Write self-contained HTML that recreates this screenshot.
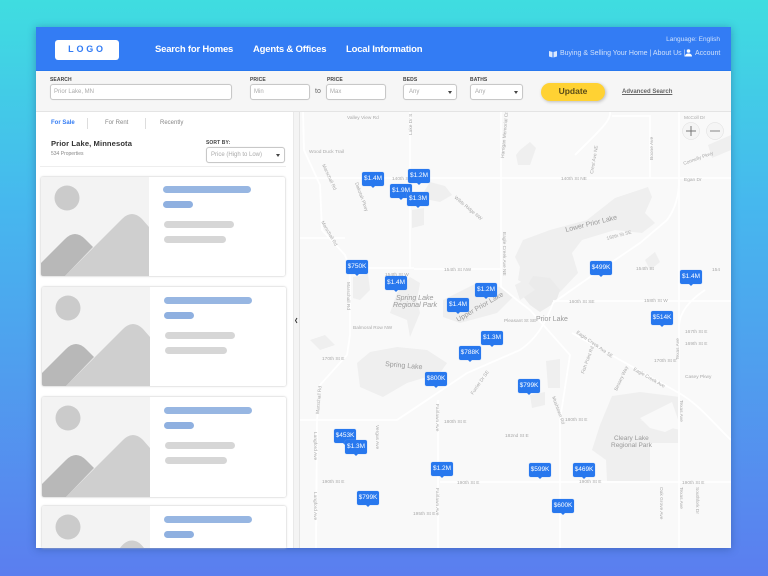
<!DOCTYPE html>
<html><head><meta charset="utf-8"><style>
html,body{margin:0;padding:0;width:768px;height:576px;overflow:hidden}
body{background:linear-gradient(180deg,#3fdde0 0%,#46b8ee 35%,#5b7eef 100%);font-family:"Liberation Sans",sans-serif;position:relative}
.a{position:absolute;white-space:nowrap}
.lb{font-size:5px;font-weight:bold;color:#444;letter-spacing:.1px}
.in{background:#fff;border:1px solid #c8c8c8;border-radius:3px;box-sizing:border-box;height:16px;font-size:6px;color:#aaa;line-height:14px;padding-left:3px;box-shadow:0 0 1px #ddd}
.ar{position:absolute;right:4px;top:6px;width:0;height:0;border-left:2px solid transparent;border-right:2px solid transparent;border-top:3px solid #444}
.card{position:absolute;width:244px;height:99px;box-sizing:border-box;background:#fff;border-radius:2px;box-shadow:0 0 2px #bbb;overflow:hidden}
.bar{position:absolute;height:7px;border-radius:4px}
.nav{top:44px;color:#fff;font-size:9.500px;font-weight:bold;letter-spacing:-.2px}
.p{position:absolute;width:22px;height:14px;margin:-7px 0 0 -11px;background:#2878ee;border-radius:2px;color:#fff;font-size:6.500px;line-height:13px;text-align:center;box-shadow:0 0 1px #8fb6f3}
.p:after{content:"";position:absolute;left:8px;top:13px;border-left:3px solid transparent;border-right:3px solid transparent;border-top:3px solid #2878ee}
</style></head><body>
<div class="a" style="left:36px;top:27px;width:695px;height:521px;background:#fff;box-shadow:0 1px 8px rgba(30,60,120,.4);overflow:hidden"></div>

<svg class="a" style="left:36px;top:111px" width="695" height="437" viewBox="36 111 695 437">
<rect x="300" y="111" width="431" height="437" fill="#f9f9f9"/>
<g fill="#efefef">
<path d="M515 257L523 240L550 230L587 220L615 198L648 187L652 197L645 213L655 223L642 233L615 230L582 240L572 253L578 273L562 290L548 303L535 290L518 280L520 267Z"/>
<path d="M533 276L550 278L560 290L556 302L540 312L530 305L522 295Z" fill="#ebebeb"/>
<path d="M357 363L370 352L397 347L427 350L447 363L440 373L407 383L383 397L360 387Z"/>
<path d="M410 277L420 283L417 300L420 313L410 337L407 320L390 313L397 293Z"/>
<path d="M353 277L368 274L370 290L360 300L353 298Z"/>
<path d="M477 283L500 287L513 297L497 313L460 323L443 317L443 300Z"/>
<path d="M430 182L445 186L452 195L440 202L430 200L422 195Z"/>
<path d="M412 210L424 208L424 225L412 228Z"/>
<path d="M612 396L640 392L680 397L679 423L650 420L640 420L680 430L680 443L650 443L650 481L607 481L606 460L592 450L600 425Z"/>
<path d="M640 418L672 402L680 425L665 432L650 428Z" fill="#f9f9f9"/>
<path d="M546 361L560 359L560 388L548 388Z"/>
<path d="M530 395L545 392L545 405L532 408Z"/>
<path d="M520 150L530 142L536 148L530 165L518 165L516 155Z"/>
<path d="M708 145L731 135V150L712 158Z"/>
<path d="M645 260L655 252L660 262L650 270Z"/>
<path d="M515 285L525 280L535 290L520 300Z"/>
<path d="M310 340L325 335L335 345L320 350Z"/>
</g>
<g fill="none" stroke="#fff" stroke-width="1.800">
<path d="M300 178H731M414 269H500M300 238H345M300 420H397L427 400L467 373L520 350C535 340 545 325 553 303L590 277L640 243L667 220C676 208 679 195 679 180"/>
<path d="M410 111V269M501 111V287L517 300L530 310M679 111V548M438 400V548M560 420V548M440 482H731"/>
<path d="M303 111L304 150L320 185L322 230L345 255L350 268V335L347 355L320 385L317 420L316 548M350 268H414"/>
<path d="M572 333L679 393C700 405 715 425 731 440M553 301H731M530 310L570 355L560 420"/>
<path d="M610 111C612 120 600 130 575 155M612 116H650L650 178M705 290C690 300 680 312 679 325"/>
</g>
<g font-family="Liberation Sans,sans-serif" font-size="4.800" fill="#aaa">
<text x="347" y="119">Valley View Rd</text><text x="309" y="153">Wood Duck Trail</text>
<text x="392" y="180">140th St</text><text x="561" y="180">140th St NE</text><text x="684" y="181">Egan Dr</text>
<text x="444" y="271">154th St NW</text><text x="385" y="276">154th St W</text><text x="636" y="270">154th St</text>
<text x="569" y="303">160th St SE</text><text x="644" y="302">158th St W</text><text x="712" y="271">154</text>
<text x="353" y="329">Balmoral Row NW</text><text x="322" y="360">170th St E</text><text x="654" y="362">170th St E</text>
<text x="444" y="423">180th St E</text><text x="565" y="421">180th St E</text><text x="505" y="437">182nd St E</text>
<text x="322" y="483">190th St E</text><text x="457" y="484">190th St E</text><text x="579" y="483">190th St E</text><text x="682" y="484">190th St E</text>
<text x="413" y="515">195th St E</text><text x="685" y="378">Casey Pkwy</text><text x="685" y="345">169th St E</text>
<text x="685" y="333">167th St E</text><text x="684" y="119">McColl Dr</text>
<text x="607" y="240" transform="rotate(-15 607 240)">150th St SE</text>
<text transform="translate(322 165) rotate(65)">Marschall Rd</text>
<text transform="translate(321 222) rotate(60)">Marschall Rd</text>
<text transform="translate(347 282) rotate(90)">Marschall Rd</text>
<text transform="translate(412 135) rotate(-90)">Lake Dr S</text>
<text transform="translate(504 158) rotate(-85)">Harrigan Memorial Ct</text>
<text transform="translate(503 232) rotate(90)">Eagle Creek Ave NE</text>
<text transform="translate(355 183) rotate(70)">Dakotah Pkwy</text>
<text transform="translate(454 198) rotate(40)">Wilds Ridge NW</text>
<text transform="translate(593 174) rotate(-80)">Crest Ave NE</text>
<text transform="translate(653 160) rotate(-90)">Boone Ave</text>
<text transform="translate(684 165) rotate(-20)">Connelly Pkwy</text>
<text transform="translate(319 414) rotate(-85)">Marschall Rd</text>
<text transform="translate(314 432) rotate(90)">Langford Ave</text>
<text transform="translate(314 492) rotate(90)">Langford Ave</text>
<text transform="translate(376 425) rotate(90)">Vergus Ave</text>
<text transform="translate(436 404) rotate(90)">Fairlawn Ave</text>
<text transform="translate(436 488) rotate(90)">Fairlawn Ave</text>
<text transform="translate(473 395) rotate(-55)">Furrier Dr SE</text>
<text transform="translate(576 333) rotate(35)">Eagle Creek Ave SE</text>
<text transform="translate(633 370) rotate(30)">Eagle Creek Ave</text>
<text transform="translate(552 397) rotate(70)">Mushtown Rd</text>
<text transform="translate(584 374) rotate(-70)">Fish Point Rd</text>
<text transform="translate(617 391) rotate(-65)">Bessey Way</text>
<text transform="translate(680 400) rotate(90)">Texas Ave</text>
<text transform="translate(680 487) rotate(90)">Texas Ave</text>
<text transform="translate(696 487) rotate(90)">Southfork Dr</text>
<text transform="translate(660 487) rotate(90)">Oak Grove Ave</text>
<text transform="translate(679 360) rotate(-90)">Texas Ave</text>
<text x="504" y="322">Pleasant St SE</text>
</g>
<g font-family="Liberation Sans,sans-serif" fill="#999">
<text transform="translate(566 232) rotate(-14)" font-size="7">Lower Prior Lake</text>
<text x="396" y="300" font-size="7" font-style="italic">Spring Lake</text>
<text x="393" y="307" font-size="7" font-style="italic">Regional Park</text>
<text transform="translate(385 366) rotate(5)" font-size="7">Spring Lake</text>
<text transform="translate(458 322) rotate(-30)" font-size="7">Upper Prior Lake</text>
<text x="536" y="321" font-size="7">Prior Lake</text>
<text x="614" y="440" font-size="6.500">Cleary Lake</text>
<text x="611" y="447" font-size="6.500">Regional Park</text>
</g>
<rect x="293" y="111" width="7" height="437" fill="#f4f4f4"/>
<rect x="299" y="111" width="1" height="437" fill="#e4e4e4"/>
<rect x="293" y="111" width="1" height="437" fill="#e9e9e9"/>
<path d="M297 318L295.500 320.500L297 323" fill="none" stroke="#333" stroke-width="1"/>
</svg>

<div class="a" style="left:36px;top:27px;width:695px;height:44px;background:#337cf4;border-bottom:1px solid #2878ee;box-sizing:border-box"></div>
<div class="a" style="left:55px;top:40px;width:64px;height:20px;background:#fff;border-radius:3px;color:#337cf4;font-size:9px;font-weight:bold;letter-spacing:2.800px;text-align:center;line-height:18px">LOGO</div>
<div class="a nav" style="left:155px">Search for Homes</div>
<div class="a nav" style="left:253px">Agents &amp; Offices</div>
<div class="a nav" style="left:346px">Local Information</div>
<div class="a" style="right:48px;top:36px;color:#cfe0fb;font-size:6.500px">Language: English</div>
<div class="a" style="left:560px;top:50px;color:#cfe0fb;font-size:7px">Buying &amp; Selling Your Home | About Us |</div>
<div class="a" style="left:695px;top:50px;color:#cfe0fb;font-size:7px">Account</div>
<svg class="a" style="left:549px;top:50px" width="8" height="8" viewBox="0 0 8 8"><path d="M0 1L3.500 2V7.500L0 6.500ZM8 1L4.500 2V7.500L8 6.500Z" fill="#dbe8fd"/></svg>
<svg class="a" style="left:685px;top:49px" width="7" height="8" viewBox="0 0 7 8"><circle cx="3.500" cy="2" r="1.800" fill="#fff"/><path d="M0 7.500C0 5 2 4.500 3.500 4.500S7 5 7 7.500Z" fill="#fff"/></svg>

<div class="a" style="left:36px;top:71px;width:695px;height:41px;background:#f6f6f6;border-bottom:1px solid #e4e4e4;box-sizing:border-box"></div>
<div class="a lb" style="left:50px;top:77px">SEARCH</div>
<div class="a in" style="left:50px;top:84px;width:182px">Prior Lake, MN</div>
<div class="a lb" style="left:250px;top:77px">PRICE</div>
<div class="a in" style="left:250px;top:84px;width:60px">Min</div>
<div class="a" style="left:315px;top:88px;font-size:7px;color:#666">to</div>
<div class="a lb" style="left:327px;top:77px">PRICE</div>
<div class="a in" style="left:326px;top:84px;width:60px">Max</div>
<div class="a lb" style="left:403px;top:77px">BEDS</div>
<div class="a in" style="left:403px;top:84px;width:54px;padding-left:5px">Any<span class="ar"></span></div>
<div class="a lb" style="left:470px;top:77px">BATHS</div>
<div class="a in" style="left:470px;top:84px;width:53px;padding-left:4px">Any<span class="ar"></span></div>
<div class="a" style="left:541px;top:83px;width:64px;height:18px;background:#ffd233;border-radius:9px;box-shadow:1px 1px 3px #bbb;font-size:8.500px;font-weight:bold;color:#5a4c18;text-align:center;line-height:17px">Update</div>
<div class="a" style="left:622px;top:89px;font-size:6px;font-weight:bold;color:#666;text-decoration:underline">Advanced Search</div>

<div class="a" style="left:51px;top:120px;font-size:6px;font-weight:bold;color:#337cf4">For Sale</div>
<div class="a" style="left:87px;top:118px;width:1px;height:11px;background:#ddd"></div>
<div class="a" style="left:105px;top:120px;font-size:6px;color:#888">For Rent</div>
<div class="a" style="left:145px;top:118px;width:1px;height:11px;background:#ddd"></div>
<div class="a" style="left:160px;top:120px;font-size:6px;color:#888">Recently</div>
<div class="a" style="left:51px;top:139px;font-size:7.600px;font-weight:bold;color:#333;letter-spacing:.1px">Prior Lake, Minnesota</div>
<div class="a" style="left:51px;top:151px;font-size:5px;color:#888">534 Properties</div>
<div class="a lb" style="left:206px;top:140px">SORT BY:</div>
<div class="a in" style="left:206px;top:147px;width:79px;padding-left:4px">Price (High to Low)<span class="ar"></span></div>
<div class="a" style="left:40px;top:166px;width:246px;height:1px;background:#eee"></div>

<div class="card" style="left:41px;top:177px"><svg class="a" style="left:0;top:0" width="108" height="99" viewBox="0 0 108 99"><rect width="108" height="99" fill="#f3f3f3"/><circle cx="26" cy="21" r="12.500" fill="#cbcbcb"/><path d="M24 99L81 42Q91 32 101 42L108 50V99Z" fill="#cfcfcf"/><path d="M0 86L24 62Q34 52 44 62L52 70L24 99H0Z" fill="#b8b8b8"/></svg><div class="bar" style="left:122px;top:9px;width:88px;background:#97b6e2"></div><div class="bar" style="left:122px;top:24px;width:30px;background:#8fb0e0"></div><div class="bar" style="left:123px;top:44px;width:70px;background:#d6d6d6"></div><div class="bar" style="left:123px;top:59px;width:62px;background:#d6d6d6"></div></div>
<div class="card" style="left:42px;top:287px"><svg class="a" style="left:0;top:0" width="108" height="99" viewBox="0 0 108 99"><rect width="108" height="99" fill="#f3f3f3"/><circle cx="26" cy="21" r="12.500" fill="#cbcbcb"/><path d="M24 99L81 42Q91 32 101 42L108 50V99Z" fill="#cfcfcf"/><path d="M0 86L24 62Q34 52 44 62L52 70L24 99H0Z" fill="#b8b8b8"/></svg><div class="bar" style="left:122px;top:10px;width:88px;background:#97b6e2"></div><div class="bar" style="left:122px;top:25px;width:30px;background:#8fb0e0"></div><div class="bar" style="left:123px;top:45px;width:70px;background:#d6d6d6"></div><div class="bar" style="left:123px;top:60px;width:62px;background:#d6d6d6"></div></div>
<div class="card" style="left:42px;top:397px;height:100px"><svg class="a" style="left:0;top:0" width="108" height="100" viewBox="0 0 108 100"><rect width="108" height="100" fill="#f3f3f3"/><circle cx="26" cy="21" r="12.500" fill="#cbcbcb"/><path d="M24 100L81 43Q91 33 101 43L108 51V100Z" fill="#cfcfcf"/><path d="M0 87L24 63Q34 53 44 63L52 71L24 100H0Z" fill="#b8b8b8"/></svg><div class="bar" style="left:122px;top:10px;width:88px;background:#97b6e2"></div><div class="bar" style="left:122px;top:25px;width:30px;background:#8fb0e0"></div><div class="bar" style="left:123px;top:45px;width:70px;background:#d6d6d6"></div><div class="bar" style="left:123px;top:60px;width:62px;background:#d6d6d6"></div></div>
<div class="card" style="left:42px;top:506px;height:42px;border-radius:2px 2px 0 0"><svg class="a" style="left:0;top:0" width="108" height="42" viewBox="0 0 108 42"><rect width="108" height="42" fill="#f3f3f3"/><circle cx="26" cy="21" r="12.500" fill="#cbcbcb"/><path d="M78 42C85 32 95 32 102 42Z" fill="#cfcfcf"/></svg><div class="bar" style="left:122px;top:10px;width:88px;background:#97b6e2"></div><div class="bar" style="left:122px;top:25px;width:30px;background:#8fb0e0"></div></div>

<svg class="a" style="left:678px;top:118px" width="50" height="26" viewBox="678 118 50 26">
<circle cx="691" cy="131" r="8.500" fill="#f5f5f5" stroke="#ddd" stroke-width=".5"/>
<circle cx="715" cy="131" r="8.500" fill="#f5f5f5" stroke="#ddd" stroke-width=".5"/>
<path d="M686 131H696M691 126V136" stroke="#777" stroke-width="1" fill="none"/>
<path d="M710 131H720" stroke="#888" stroke-width="1" fill="none"/>
</svg>

<div class="p" style="left:373px;top:179px">$1.4M</div>
<div class="p" style="left:419px;top:176px">$1.2M</div>
<div class="p" style="left:401px;top:191px">$1.9M</div>
<div class="p" style="left:418px;top:199px">$1.3M</div>
<div class="p" style="left:357px;top:267px">$750K</div>
<div class="p" style="left:396px;top:283px">$1.4M</div>
<div class="p" style="left:486px;top:290px">$1.2M</div>
<div class="p" style="left:458px;top:305px">$1.4M</div>
<div class="p" style="left:601px;top:268px">$499K</div>
<div class="p" style="left:691px;top:277px">$1.4M</div>
<div class="p" style="left:662px;top:318px">$514K</div>
<div class="p" style="left:492px;top:338px">$1.3M</div>
<div class="p" style="left:470px;top:353px">$788K</div>
<div class="p" style="left:436px;top:379px">$800K</div>
<div class="p" style="left:529px;top:386px">$799K</div>
<div class="p" style="left:345px;top:436px">$453K</div>
<div class="p" style="left:356px;top:447px">$1.3M</div>
<div class="p" style="left:442px;top:469px">$1.2M</div>
<div class="p" style="left:540px;top:470px">$599K</div>
<div class="p" style="left:584px;top:470px">$469K</div>
<div class="p" style="left:368px;top:498px">$799K</div>
<div class="p" style="left:563px;top:506px">$600K</div>
</body></html>
